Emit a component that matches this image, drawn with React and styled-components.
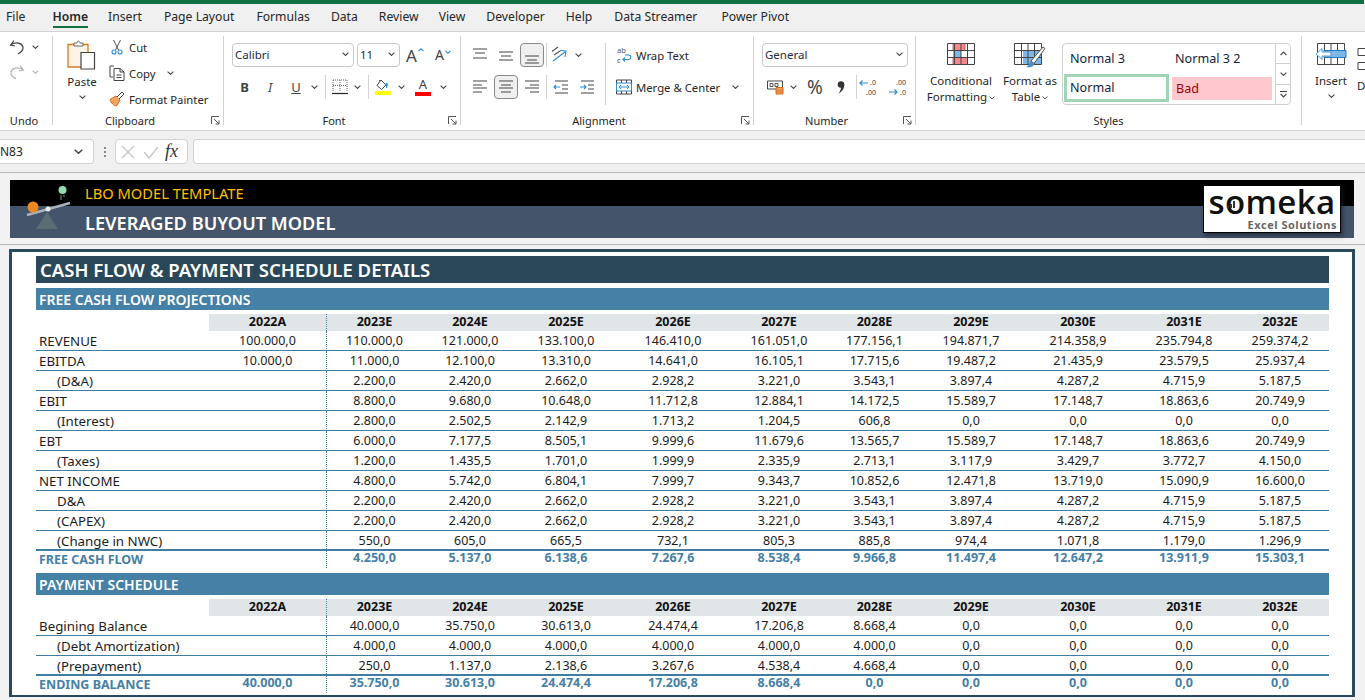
import React from 'react';
import styled, { createGlobalStyle } from 'styled-components';

const GlobalStyle = createGlobalStyle`
  html, body { margin: 0; padding: 0; background: #f2f2f2; overflow: hidden; }
  body { font-family: "Noto Sans", "Open Sans", sans-serif; color: #262626; }
  svg { display: block; flex: none; }
`;

const years = ['2022A', '2023E', '2024E', '2025E', '2026E', '2027E', '2028E', '2029E', '2030E', '2031E', '2032E'];

const cashFlow = [
  { label: 'REVENUE', values: ['100.000,0', '110.000,0', '121.000,0', '133.100,0', '146.410,0', '161.051,0', '177.156,1', '194.871,7', '214.358,9', '235.794,8', '259.374,2'] },
  { label: 'EBITDA', values: ['10.000,0', '11.000,0', '12.100,0', '13.310,0', '14.641,0', '16.105,1', '17.715,6', '19.487,2', '21.435,9', '23.579,5', '25.937,4'] },
  { label: '(D&A)', indent: true, values: ['', '2.200,0', '2.420,0', '2.662,0', '2.928,2', '3.221,0', '3.543,1', '3.897,4', '4.287,2', '4.715,9', '5.187,5'] },
  { label: 'EBIT', values: ['', '8.800,0', '9.680,0', '10.648,0', '11.712,8', '12.884,1', '14.172,5', '15.589,7', '17.148,7', '18.863,6', '20.749,9'] },
  { label: '(Interest)', indent: true, values: ['', '2.800,0', '2.502,5', '2.142,9', '1.713,2', '1.204,5', '606,8', '0,0', '0,0', '0,0', '0,0'] },
  { label: 'EBT', values: ['', '6.000,0', '7.177,5', '8.505,1', '9.999,6', '11.679,6', '13.565,7', '15.589,7', '17.148,7', '18.863,6', '20.749,9'] },
  { label: '(Taxes)', indent: true, values: ['', '1.200,0', '1.435,5', '1.701,0', '1.999,9', '2.335,9', '2.713,1', '3.117,9', '3.429,7', '3.772,7', '4.150,0'] },
  { label: 'NET INCOME', values: ['', '4.800,0', '5.742,0', '6.804,1', '7.999,7', '9.343,7', '10.852,6', '12.471,8', '13.719,0', '15.090,9', '16.600,0'] },
  { label: 'D&A', indent: true, values: ['', '2.200,0', '2.420,0', '2.662,0', '2.928,2', '3.221,0', '3.543,1', '3.897,4', '4.287,2', '4.715,9', '5.187,5'] },
  { label: '(CAPEX)', indent: true, values: ['', '2.200,0', '2.420,0', '2.662,0', '2.928,2', '3.221,0', '3.543,1', '3.897,4', '4.287,2', '4.715,9', '5.187,5'] },
  { label: '(Change in NWC)', indent: true, thick: true, values: ['', '550,0', '605,0', '665,5', '732,1', '805,3', '885,8', '974,4', '1.071,8', '1.179,0', '1.296,9'] },
];
const cashTotal = { label: 'FREE CASH FLOW', values: ['', '4.250,0', '5.137,0', '6.138,6', '7.267,6', '8.538,4', '9.966,8', '11.497,4', '12.647,2', '13.911,9', '15.303,1'] };

const payment = [
  { label: 'Begining Balance', values: ['', '40.000,0', '35.750,0', '30.613,0', '24.474,4', '17.206,8', '8.668,4', '0,0', '0,0', '0,0', '0,0'] },
  { label: '(Debt Amortization)', indent: true, values: ['', '4.000,0', '4.000,0', '4.000,0', '4.000,0', '4.000,0', '4.000,0', '0,0', '0,0', '0,0', '0,0'] },
  { label: '(Prepayment)', indent: true, thick: true, values: ['', '250,0', '1.137,0', '2.138,6', '3.267,6', '4.538,4', '4.668,4', '0,0', '0,0', '0,0', '0,0'] },
];
const paymentTotal = { label: 'ENDING BALANCE', values: ['40.000,0', '35.750,0', '30.613,0', '24.474,4', '17.206,8', '8.668,4', '0,0', '0,0', '0,0', '0,0', '0,0'] };

const tabs = [
  ['File', 6], ['Home', 27], ['Insert', 20], ['Page Layout', 22], ['Formulas', 22], ['Data', 21], ['Review', 21],
  ['View', 20], ['Developer', 21], ['Help', 21], ['Data Streamer', 22], ['Power Pivot', 24],
];

// top chrome
const TitleStrip = styled.div`
  height: 4px;
  background: #107041;
  margin-right: 1px;
`;
const TabBar = styled.div`
  height: 27px;
  display: flex;
  align-items: stretch;
  background: #f0f0f0;
  border-bottom: 1px solid #d2d2d2;
`;
const Tab = styled.div`
  margin-left: ${p => p.$gap}px;
  padding-top: 5px;
  font-size: 12.2px;
  line-height: 16px;
  position: relative;
  font-weight: ${p => (p.$active ? 600 : 400)};
  ${p => p.$active && `
    &::after {
      content: '';
      position: absolute;
      left: 0; right: 0; bottom: 3px;
      height: 2px;
      background: #107041;
    }
  `}
`;
const Ribbon = styled.div`
  height: 89px;
  padding: 4px 0 5px;
  display: flex;
  background: #fff;
  border-bottom: 1px solid #d2d2d2;
  overflow: hidden;
`;
const Group = styled.div`
  width: ${p => p.$w}px;
  height: 89px;
  flex: none;
  box-sizing: border-box;
  display: flex;
  flex-direction: column;
  border-right: ${p => (p.$open ? 'none' : '1px solid #d2d2d2')};
`;
const GroupBody = styled.div`
  height: 77px;
  padding: 7px 0 0 ${p => p.$pad || 0}px;
  display: flex;
  flex: none;
  box-sizing: border-box;
`;
const GroupFoot = styled.div`
  height: 12px;
  display: grid;
  grid-template-columns: 1fr auto 1fr;
  align-items: center;
  font-size: 11px;
  line-height: 15px;
  padding-right: ${p => p.$shift || 0}px;
  span { grid-column: 2; }
  svg { grid-column: 3; justify-self: end; margin-right: ${p => 3 - (p.$shift || 0)}px; }
`;
const Stack = styled.div`
  display: flex;
  flex-direction: column;
  flex: none;
  gap: ${p => p.$gap ?? 8}px;
  margin: ${p => p.$mt || 0}px 0 0 ${p => p.$ml || 0}px;
`;
const Line = styled.div`
  display: flex;
  align-items: center;
  flex: none;
  gap: ${p => p.$gap || 0}px;
  height: 24px;
`;
const IconBtn = styled.div`
  width: ${p => p.$w || 24}px;
  height: 24px;
  flex: none;
  box-sizing: border-box;
  display: flex;
  align-items: center;
  justify-content: center;
  font-size: 12px;
  ${p => p.$active && 'background: #f0f0f0; border: 1px solid #8a8a8a; border-radius: 4px;'}
`;
const Glyph = styled.span`
  font-size: ${p => p.$size || 13}px;
  font-weight: ${p => p.$weight || 400};
  font-style: ${p => (p.$italic ? 'italic' : 'normal')};
  text-decoration: ${p => (p.$under ? 'underline' : 'none')};
  line-height: 1;
  color: #444;
`;
const SizeMark = styled.div`
  display: flex;
  align-items: flex-start;
  gap: 1px;
  svg { margin-top: ${p => (p.$small ? 2 : 1)}px; }
`;
const ColorMark = styled.div`
  display: flex;
  flex-direction: column;
  align-items: center;
  width: 16px;
  i { width: 16px; height: 4px; margin-top: 1px; background: ${p => p.$color}; }
`;
const Divider = styled.div`
  width: ${p => p.$w || 9}px;
  flex: none;
  height: 24px;
  display: flex;
  justify-content: center;
  &::before { content: ''; width: 1px; background: #d2d2d2; }
`;
const TallDivider = styled(Divider)`
  height: 62px;
`;
const Label = styled.span`
  font-size: 11.3px;
  white-space: nowrap;
  margin-left: ${p => p.$ml || 0}px;
`;
const Combo = styled.div`
  width: ${p => p.$w}px;
  height: 24px;
  flex: none;
  box-sizing: border-box;
  margin-right: ${p => p.$mr || 0}px;
  border: 1px solid #c8c8c8;
  border-radius: 4px;
  display: flex;
  align-items: center;
  justify-content: space-between;
  padding: 0 4px 1px 2px;
  font-size: 11.5px;
  color: #1d2a44;
`;
const BigButton = styled.div`
  width: ${p => p.$w}px;
  flex: none;
  display: flex;
  flex-direction: column;
  align-items: ${p => (p.$start ? 'flex-start' : 'center')};
  margin: ${p => p.$mt || 0}px 0 0 ${p => p.$ml || 0}px;
  font-size: 11.5px;
  line-height: 16px;
  text-align: center;
  white-space: nowrap;
  > svg:first-child { margin-bottom: ${p => p.$mb ?? 4}px; }
  > svg:last-child { margin-top: 5px; }
`;
const InlineMark = styled.span`
  display: inline-flex;
  vertical-align: middle;
  margin-left: 2px;
`;
const Gallery = styled.div`
  width: 229px;
  height: 62px;
  box-sizing: border-box;
  border: 1px solid #d0d0d0;
  border-radius: 4px;
  display: flex;
`;
const Swatches = styled.div`
  flex: 1;
  display: grid;
  grid-template-columns: 105px 105px;
  grid-template-rows: 30px 28px;
  padding: 0 0 2px 1px;
  font-size: 12.6px;
  color: #10243e;
`;
const Swatch = styled.div`
  display: flex;
  align-items: center;
  padding-left: ${p => (p.$picked ? 3 : 6)}px;
  padding-bottom: 1px;
  box-sizing: border-box;
  ${p => p.$picked && 'border: 3px solid #a0d5b6;'}
  ${p => p.$bad && 'background: #ffc7ce; color: #9c0006; margin: 3px 0 2px 3px; padding-left: 4px; width: 100px;'}
`;
const GalleryArrows = styled.div`
  width: 14px;
  flex: none;
  border-left: 1px solid #d0d0d0;
  display: flex;
  flex-direction: column;
`;
const GalleryArrow = styled.div`
  flex: 1;
  display: flex;
  align-items: center;
  justify-content: center;
  & + & { border-top: 1px solid #d0d0d0; }
`;

// formula bar
const FormulaBar = styled.div`
  height: 41px;
  display: flex;
  align-items: center;
  background: #f0f0f0;
`;
const NameBox = styled.div`
  width: 94px;
  height: 25px;
  box-sizing: border-box;
  flex: none;
  background: #fff;
  border: 1px solid #d2d2d2;
  border-left: none;
  border-radius: 0 4px 4px 0;
  display: flex;
  align-items: center;
  justify-content: space-between;
  padding: 0 10px 0 0;
  font-size: 12px;
`;
const Grip = styled.div`
  width: 21px;
  flex: none;
  display: flex;
  flex-direction: column;
  align-items: center;
  gap: 2px;
  i { width: 2px; height: 2px; background: #8a8a8a; }
`;
const FxBox = styled.div`
  width: 73px;
  height: 25px;
  flex: none;
  box-sizing: border-box;
  background: #fff;
  border: 1px solid #d2d2d2;
  border-radius: 4px;
  display: flex;
  align-items: center;
  gap: 8px;
  padding-left: 5px;
`;
const FxText = styled.span`
  font-family: "Liberation Serif", serif;
  font-style: italic;
  font-size: 18px;
  color: #333;
  margin-left: -2px;
`;
const FormulaInput = styled.div`
  flex: 1;
  height: 25px;
  margin-left: 5px;
  box-sizing: border-box;
  background: #fff;
  border: 1px solid #d2d2d2;
  border-right: none;
  border-radius: 4px 0 0 4px;
`;

// banner
const Banner = styled.div`
  position: relative;
  margin: 0 11px 0 10px;
  height: 58px;
  display: grid;
  grid-template-rows: 26px 32px;
`;
const BannerTop = styled.div`
  background: #000;
  color: #ffc000;
  font-size: 14.7px;
  line-height: 27px;
  padding-left: 75px;
`;
const BannerBottom = styled.div`
  background: #44546a;
  color: #fff;
  font-size: 18.2px;
  font-weight: 600;
  line-height: 35px;
  padding-left: 75px;
`;
const BannerArt = styled.svg`
  position: absolute;
  left: 15px;
  top: 5px;
`;
const LogoBox = styled.div`
  position: absolute;
  left: 1193px;
  top: 5px;
  width: 138px;
  height: 48px;
  box-sizing: border-box;
  background: #fff;
  border: 1px solid #000;
  box-shadow: 2px 3px 4px rgba(20, 30, 45, 0.6);
  color: #111;
  text-align: center;
`;
const LogoWord = styled.div`
  font-family: "Open Sans", sans-serif;
  font-size: 33px;
  font-weight: 600;
  line-height: 32px;
  letter-spacing: 0.4px;
`;
const LogoSub = styled.div`
  font-family: "Open Sans", sans-serif;
  font-size: 11px;
  font-weight: 700;
  line-height: 14px;
  color: #666;
  text-align: right;
  padding-right: 3px;
  letter-spacing: 0.5px;
`;
const LogoBars = styled.svg`
  position: absolute;
  left: 23px;
  top: 15px;
`;

// sheet
const Rule = styled.div`
  height: 1px;
  background: #b8b8b8;
  margin: ${p => p.$top ?? 6}px 0 ${p => p.$bottom ?? 4}px;
`;
const Frame = styled.div`
  margin: 0 10px 0 9px;
  height: 448px;
  box-sizing: border-box;
  background: #fff;
  border: 3px solid #2a4a5b;
  border-bottom-width: 2px;
  padding: 4px 23px 0 24px;
`;
const Title = styled.div`
  height: 27px;
  background: #2a4859;
  color: #fff;
  font-size: 18.5px;
  font-weight: 600;
  line-height: 27px;
  padding-left: 4px;
  margin-bottom: 5px;
`;
const Section = styled.div`
  height: 22px;
  margin-top: ${p => p.$mt || 0}px;
  margin-bottom: 4px;
  background: #4580a6;
  color: #fff;
  font-size: 14px;
  font-weight: 600;
  line-height: 24px;
  padding-left: 3px;
`;
const Row = styled.div`
  display: grid;
  grid-template-columns: 173px 117px 96px 96px 96px 118px 94px 97px 96px 118px 94px 98px;
  height: ${p => p.$h || 20}px;
  box-sizing: border-box;
  font-size: 12.5px;
  line-height: ${p => (p.$total ? 13 : 20)}px;
  color: ${p => (p.$total ? '#4580a6' : '#1c1c1c')};
  font-weight: ${p => (p.$total ? 700 : 400)};
  ${p => p.$ruled && `border-bottom: ${p.$thick ? 2 : 1}px solid #3f7ea0;`}
  & > :nth-child(3) { border-left: 1px dotted #3f7ea0; }
`;
const RowLabel = styled.div`
  padding-left: ${p => (p.$indent ? 21 : 3)}px;
  white-space: nowrap;
  ${p => (p.$total ? 'line-height: 17px;' : 'font-size: 13.3px;')}
`;
const Cell = styled.div`
  text-align: center;
  white-space: nowrap;
`;
const HeadCell = styled(Cell)`
  background: #e0e5e8;
  font-weight: 700;
  line-height: 16px;
  color: #111;
`;

// icons
const Chevron = ({ size = 7, color = '#444' }) => (
  <svg width={size} height={size * 0.6} viewBox="0 0 7 4.2">
    <path d="M.6.6 3.5 3.4 6.4.6" fill="none" stroke={color} strokeWidth="1.1" />
  </svg>
);

const Caret = ({ down }) => (
  <svg width="6" height="4" viewBox="0 0 6 4">
    <path d={down ? 'M.5.8 3 3.200 5.500.8' : 'M.5 3.200 3 .8l2.500 2.400'} fill="none" stroke="#2e8bd0" strokeWidth="1.100" />
  </svg>
);

const Lines = ({ rows }) => (
  <svg width="16" height="18" viewBox="0 0 16 18">
    {rows.map(([a, b, y], i) => <path key={i} d={`M${a} ${y}H${b}`} stroke="#444" strokeWidth="1" />)}
  </svg>
);

const Launcher = () => (
  <svg width="9" height="9" viewBox="0 0 9 9">
    <path d="M.5 8V.5H8M3 3l5 5M8 4.500V8H4.500" fill="none" stroke="#555" strokeWidth="1" />
  </svg>
);

const UndoIcon = () => (
  <svg width="16" height="16" viewBox="0 0 16 16">
    <path d="M5 1.500 1.500 6 6 7M2 5.600C7 2.500 13 4 14 8c.6 3-1.500 5-5 7" fill="none" stroke="#444" strokeWidth="1.200" />
  </svg>
);

const RedoIcon = () => (
  <svg width="16" height="16" viewBox="0 0 16 16">
    <path d="M11 1.500 14.500 6 10 7M14 5.600C9 2.500 3 4 2 8c-.6 3 1.500 5 5 7" fill="none" stroke="#b4b4b4" strokeWidth="1.200" />
  </svg>
);

const PasteIcon = () => (
  <svg width="30" height="32" viewBox="0 0 30 32">
    <path d="M1 4.500h20V27H1z" fill="#fdf3e6" stroke="#d67c1c" strokeWidth="1.300" />
    <path d="M7 5V3h3c0-2.500 3-2.500 3 0h3v3H7z" fill="#fff" stroke="#666" strokeWidth="1" />
    <path d="M14 12.500h13.500V29H14z" fill="#fff" stroke="#444" strokeWidth="1.200" />
  </svg>
);

const ScissorsIcon = () => (
  <svg width="12" height="16" viewBox="0 0 12 16">
    <path d="M2.500 1 7.500 11M9.500 1 4.500 11" fill="none" stroke="#555" strokeWidth="1" />
    <circle cx="3" cy="13" r="2" fill="none" stroke="#2e8bd0" strokeWidth="1.100" />
    <circle cx="9" cy="13" r="2" fill="none" stroke="#2e8bd0" strokeWidth="1.100" />
  </svg>
);

const CopyIcon = () => (
  <svg width="16" height="16" viewBox="0 0 16 16">
    <path d="M5 1H1v11h3M5 3.500h6l4 3.500v8.500H5zM11 3.500V7h4M7.500 10h5M7.500 12.500h5" fill="none" stroke="#444" strokeWidth="1" />
  </svg>
);

const BrushIcon = () => (
  <svg width="16" height="16" viewBox="0 0 16 16">
    <path d="M1 8.500 7 5l4 4-3.500 6C5 15 2 12 1 8.500z" fill="#f4a460" stroke="#d6691c" strokeWidth="1" />
    <path d="m8 6 5-5 2 2-5 5" fill="#fff" stroke="#444" strokeWidth="1" />
  </svg>
);

const BordersIcon = () => (
  <svg width="16" height="16" viewBox="0 0 16 16">
    <path d="M1 1h14M1 1v11M15 1v11M8 1v11M1 6.500h14" fill="none" stroke="#666" strokeWidth="1" strokeDasharray="1 1" />
    <path d="M0 14.500h16" stroke="#222" strokeWidth="1.200" />
  </svg>
);

const FillIcon = () => (
  <svg width="16" height="16" viewBox="0 0 16 16">
    <path d="m6 1 5 5-4.500 4.500L2 6.500zM5 2l-1-1" fill="none" stroke="#444" strokeWidth="1" />
    <path d="M11.500 9V5.500M10 6.500l1.500-2 1.500 2" fill="none" stroke="#2e8bd0" strokeWidth="1.200" />
    <path d="M0 12h16v4H0z" fill="#ffff00" />
  </svg>
);

const OrientIcon = () => (
  <svg width="18" height="18" viewBox="0 0 18 18">
    <path d="M1 5.500 7 1M3 9l6-4" stroke="#555" strokeWidth="1.200" />
    <path d="m2 15 12-9M9 4.500l6 .5-1 6" fill="none" stroke="#2e8bd0" strokeWidth="1.100" />
  </svg>
);

const OutdentIcon = ({ flip }) => (
  <svg width="16" height="14" viewBox="0 0 16 14">
    <path d="M2 1h13M9 5h6M9 9h6M2 13h13" stroke="#444" strokeWidth="1" />
    <path d={flip ? 'M1 7h6M5 5l2 2-2 2' : 'M1 7h6M3 5 1 7l2 2'} fill="none" stroke="#2e8bd0" strokeWidth="1.100" />
  </svg>
);

const WrapIcon = () => (
  <svg width="16" height="22" viewBox="0 0 16 22">
    <text x="1" y="9" fontSize="7.500" fill="#555">ab</text>
    <text x="1" y="19" fontSize="7.500" fill="#555">c</text>
    <path d="M9 11h3.500c3 0 3 4.500 0 4.500H7M9 13.500l-2 2 2 2" fill="none" stroke="#2e8bd0" strokeWidth="1.100" />
  </svg>
);

const MergeIcon = () => (
  <svg width="16" height="16" viewBox="0 0 16 16">
    <path d="M.5 1h15v14H.5zM5.500 1v3M10.500 1v3M5.500 12v3M10.500 12v3" fill="none" stroke="#444" strokeWidth="1" />
    <path d="M.5 4h15v8H.5z" fill="#fff" stroke="#2e8bd0" strokeWidth="1" />
    <path d="M3 8h10M5 6 3 8l2 2M11 6l2 2-2 2" fill="none" stroke="#2e8bd0" strokeWidth="1" />
  </svg>
);

const AccountingIcon = () => (
  <svg width="17" height="15" viewBox="0 0 17 15">
    <path d="M.5 1h15v8H.5z" fill="none" stroke="#444" strokeWidth="1" />
    <path d="M3 3.500h3v3H3zM8 3.500h3v3H8z" fill="none" stroke="#444" strokeWidth=".9" />
    <path d="M9 7.500h7V14H9z" fill="#f4a460" stroke="#d6691c" strokeWidth="1" />
    <path d="M9 10h7M9 12h7" stroke="#d6691c" strokeWidth=".8" />
  </svg>
);

const CommaIcon = () => (
  <svg width="8" height="13" viewBox="0 0 8 13">
    <circle cx="4" cy="3.500" r="3.300" fill="#333" />
    <path d="M7.200 3.500C7.400 7.500 5 11 1.500 12.500 3.500 10 4 8 4 6z" fill="#333" />
  </svg>
);

const DecimalIcon = ({ more }) => (
  <svg width="20" height="21" viewBox="0 0 20 21">
    <path d={more ? 'M1 15h8M6.500 12.500 9 15l-2.500 2.500' : 'M9 6H1M3.500 3.500 1 6l2.500 2.500'} fill="none" stroke="#2e8bd0" strokeWidth="1.200" />
    {more ? (
      <>
        <text x="8" y="8" fontSize="7" fill="#444">.00</text>
        <text x="12" y="18" fontSize="7" fill="#444">.0</text>
      </>
    ) : (
      <>
        <text x="11" y="8" fontSize="7" fill="#444">.0</text>
        <text x="7" y="18" fontSize="7" fill="#444">.00</text>
      </>
    )}
  </svg>
);

const GridBase = () => (
  <path d="M.5.5h27v21H.5zM7.500.5v21M14 .5v21M20.500.5v21M.5 7.500h27M.5 14.500h27" fill="none" stroke="#444" strokeWidth="1" />
);

const ConditionalIcon = () => (
  <svg width="28" height="22" viewBox="0 0 28 22">
    <path d="M6 .5h12v7H6zM6 14.500h14.500v7H6z" fill="#f4868c" stroke="#c8323c" strokeWidth=".8" />
    <path d="M6 7.500h8v7H6z" fill="#7eb8e8" />
    <GridBase />
  </svg>
);

const TableIcon = () => (
  <svg width="32" height="26" viewBox="0 0 32 26">
    <path d="M9 7.500h18v14H9z" fill="#7eb8e8" />
    <GridBase />
    <path d="m17 18 12-14 2 1.500-11 15z" fill="#fff" stroke="#444" strokeWidth=".9" />
    <path d="M17 18c-2 1-1 4-5 6 4 1 8 0 8-3.500z" fill="#4a90d0" />
  </svg>
);

const InsertIcon = () => (
  <svg width="32" height="22" viewBox="0 0 32 22">
    <path d="M2.500.5h27v21h-27zM9.500.5v21M16 .5v21M22.500.5v21" fill="none" stroke="#444" strokeWidth="1" />
    <path d="M9 7.500h22v7H9z" fill="#7eb8e8" stroke="#1f78c1" strokeWidth="1" />
    <path d="M16 9H7V5.500L1 11l6 5.500V13h9z" fill="#fff" stroke="#4a9ad6" strokeWidth="1" />
  </svg>
);

const DeleteIcon = () => (
  <svg width="10" height="22" viewBox="0 0 10 22">
    <path d="M10 .5H1v7h9M10 14.500H1v7h9" fill="none" stroke="#444" strokeWidth="1" />
  </svg>
);

const CrossIcon = () => (
  <svg width="14" height="14" viewBox="0 0 14 14">
    <path d="m1 1 12 12M13 1 1 13" stroke="#c4c4c4" strokeWidth="1.200" />
  </svg>
);

const CheckIcon = () => (
  <svg width="16" height="14" viewBox="0 0 16 14">
    <path d="m1 7 5 6 9-11" fill="none" stroke="#c4c4c4" strokeWidth="1.200" />
  </svg>
);

const top = [[1, 15, 3], [3, 13, 7], [1, 15, 12]];
const middle = [[1, 15, 6], [3, 13, 10], [1, 15, 14]];
const bottom = [[1, 15, 10], [3, 13, 14], [1, 15, 17]];
const left = [[1, 15, 3], [1, 10, 7], [1, 15, 10], [1, 10, 14]];
const center = [[1, 15, 3], [3, 13, 7], [1, 15, 10], [3, 13, 14]];
const right = [[1, 15, 3], [6, 15, 7], [1, 15, 10], [6, 15, 14]];

const Numbers = ({ row, total, ruled }) => (
  <Row $total={total} $ruled={ruled} $thick={row.thick} $h={total ? 17 : 20}>
    <RowLabel $indent={row.indent} $total={total}>{row.label}</RowLabel>
    {row.values.map((v, i) => <Cell key={i}>{v}</Cell>)}
  </Row>
);

const YearHeader = () => (
  <Row $h={17}>
    <RowLabel />
    {years.map(y => <HeadCell key={y}>{y}</HeadCell>)}
  </Row>
);

export default function App() {
  return (
    <>
      <GlobalStyle />
      <TitleStrip />
      <TabBar>
        {tabs.map(([name, gap]) => <Tab key={name} $gap={gap} $active={name === 'Home'}>{name}</Tab>)}
      </TabBar>
      <Ribbon>
        <Group $w={53}>
          <GroupBody $pad={9}>
            <Stack $gap={1} $mt={-8}>
              <Line><UndoIcon /><IconBtn $w={20}><Chevron /></IconBtn></Line>
              <Line><RedoIcon /><IconBtn $w={20}><Chevron color="#b4b4b4" /></IconBtn></Line>
            </Stack>
          </GroupBody>
          <GroupFoot $shift={4}><span>Undo</span></GroupFoot>
        </Group>
        <Group $w={171}>
          <GroupBody $pad={14}>
            <BigButton $w={30} $mb={2} $mt={-3}>
              <PasteIcon />
              Paste
              <Chevron />
            </BigButton>
            <Stack $gap={2} $ml={12} $mt={-8}>
              <Line><IconBtn $w={16}><ScissorsIcon /></IconBtn><Label $ml={4}>Cut</Label></Line>
              <Line><CopyIcon /><Label $ml={4}>Copy</Label><IconBtn $w={30}><Chevron /></IconBtn></Line>
              <Line><BrushIcon /><Label $ml={4}>Format Painter</Label></Line>
            </Stack>
          </GroupBody>
          <GroupFoot $shift={16}><span>Clipboard</span><Launcher /></GroupFoot>
        </Group>
        <Group $w={237}>
          <GroupBody $pad={8}>
            <Stack>
              <Line>
                <Combo $w={122} $mr={3}>Calibri<Chevron /></Combo>
                <Combo $w={43}>11<Chevron /></Combo>
                <IconBtn $w={30}><SizeMark><Glyph $size={17}>A</Glyph><Caret /></SizeMark></IconBtn>
                <IconBtn $w={26}><SizeMark $small><Glyph $size={14}>A</Glyph><Caret down /></SizeMark></IconBtn>
              </Line>
              <Line>
                <IconBtn $w={25}><Glyph $weight={700}>B</Glyph></IconBtn>
                <IconBtn $w={26}><Glyph $italic>I</Glyph></IconBtn>
                <IconBtn $w={26}><Glyph $under>U</Glyph></IconBtn>
                <IconBtn $w={11}><Chevron /></IconBtn>
                <Divider $w={10} />
                <IconBtn $w={20}><BordersIcon /></IconBtn>
                <IconBtn $w={14}><Chevron /></IconBtn>
                <Divider $w={8} />
                <IconBtn $w={22}><FillIcon /></IconBtn>
                <IconBtn $w={14}><Chevron /></IconBtn>
                <IconBtn $w={30}><ColorMark $color="#ff0000"><Glyph $size={13}>A</Glyph><i /></ColorMark></IconBtn>
                <IconBtn $w={10}><Chevron /></IconBtn>
              </Line>
            </Stack>
          </GroupBody>
          <GroupFoot $shift={16}><span>Font</span><Launcher /></GroupFoot>
        </Group>
        <Group $w={293}>
          <GroupBody $pad={7}>
            <Stack>
              <Line $gap={2}>
                <IconBtn><Lines rows={top} /></IconBtn>
                <IconBtn><Lines rows={middle} /></IconBtn>
                <IconBtn $active><Lines rows={bottom} /></IconBtn>
                <Divider $w={1} />
                <IconBtn $w={22}><OrientIcon /></IconBtn>
                <IconBtn $w={10}><Chevron /></IconBtn>
              </Line>
              <Line $gap={2}>
                <IconBtn><Lines rows={left} /></IconBtn>
                <IconBtn $active><Lines rows={center} /></IconBtn>
                <IconBtn><Lines rows={right} /></IconBtn>
                <Divider $w={1} />
                <IconBtn><OutdentIcon /></IconBtn>
                <IconBtn><OutdentIcon flip /></IconBtn>
              </Line>
            </Stack>
            <TallDivider $w={12} />
            <Stack>
              <Line><IconBtn $w={25}><WrapIcon /></IconBtn><Label>Wrap Text</Label></Line>
              <Line>
                <IconBtn $w={25}><MergeIcon /></IconBtn>
                <Label>Merge &amp; Center</Label>
                <IconBtn $w={30}><Chevron /></IconBtn>
              </Line>
            </Stack>
          </GroupBody>
          <GroupFoot $shift={16}><span>Alignment</span><Launcher /></GroupFoot>
        </Group>
        <Group $w={162}>
          <GroupBody $pad={8}>
            <Stack>
              <Combo $w={146}>General<Chevron /></Combo>
              <Line>
                <IconBtn $w={26}><AccountingIcon /></IconBtn>
                <IconBtn $w={10}><Chevron /></IconBtn>
                <IconBtn $w={34}><Glyph $size={19}>%</Glyph></IconBtn>
                <IconBtn $w={18}><CommaIcon /></IconBtn>
                <Divider $w={12} />
                <IconBtn $w={14}><DecimalIcon /></IconBtn>
                <IconBtn $w={44}><DecimalIcon more /></IconBtn>
              </Line>
            </Stack>
          </GroupBody>
          <GroupFoot $shift={16}><span>Number</span><Launcher /></GroupFoot>
        </Group>
        <Group $w={386}>
          <GroupBody $pad={8}>
            <BigButton $w={74} $mb={8}>
              <ConditionalIcon />
              Conditional
              <span>Formatting<InlineMark><Chevron size={6} /></InlineMark></span>
            </BigButton>
            <BigButton $w={64} $mb={4}>
              <TableIcon />
              Format as
              <span>Table<InlineMark><Chevron size={6} /></InlineMark></span>
            </BigButton>
            <Gallery>
              <Swatches>
                <Swatch>Normal 3</Swatch>
                <Swatch>Normal 3 2</Swatch>
                <Swatch $picked>Normal</Swatch>
                <Swatch $bad>Bad</Swatch>
              </Swatches>
              <GalleryArrows>
                <GalleryArrow><svg width="7" height="5" viewBox="0 0 7 5"><path d="M.6 4 3.500 1 6.400 4" fill="none" stroke="#444" strokeWidth="1.100" /></svg></GalleryArrow>
                <GalleryArrow><Chevron /></GalleryArrow>
                <GalleryArrow><svg width="7" height="7" viewBox="0 0 7 7"><path d="M0 .5h7M.6 3 3.500 6 6.400 3" fill="none" stroke="#444" strokeWidth="1.100" /></svg></GalleryArrow>
              </GalleryArrows>
            </Gallery>
          </GroupBody>
          <GroupFoot><span>Styles</span></GroupFoot>
        </Group>
        <Group $w={63} $open>
          <GroupBody $pad={13}>
            <BigButton $w={32} $mb={8}>
              <InsertIcon />
              Insert
              <Chevron />
            </BigButton>
            <BigButton $w={14} $mb={8} $ml={10} $start>
              <DeleteIcon />
              D
            </BigButton>
          </GroupBody>
        </Group>
      </Ribbon>
      <FormulaBar>
        <NameBox>N83<Chevron size={9} /></NameBox>
        <Grip><i /><i /><i /></Grip>
        <FxBox><CrossIcon /><CheckIcon /><FxText>fx</FxText></FxBox>
        <FormulaInput />
      </FormulaBar>
      <Rule $top={0} $bottom={7} />
      <Banner>
        <BannerTop>LBO MODEL TEMPLATE</BannerTop>
        <BannerBottom>LEVERAGED BUYOUT MODEL</BannerBottom>
        <BannerArt width="46" height="46" viewBox="0 0 46 46">
          <path d="M22 27 11 44h22z" fill="#5c6c74" />
          <path d="M2 30 45 18" stroke="#aab2bb" strokeWidth="2.500" />
          <circle cx="23" cy="24" r="2.500" fill="#e8ecef" />
          <circle cx="8" cy="22" r="5.500" fill="#ee8a1d" />
          <circle cx="37.500" cy="5" r="4" fill="#8fdcae" />
          <path d="M36 10v5M39 10v2" stroke="#8a8a8a" strokeWidth="1" />
        </BannerArt>
        <LogoBox>
          <LogoWord>someka</LogoWord>
          <LogoSub>Excel Solutions</LogoSub>
          <LogoBars width="8" height="7" viewBox="0 0 8 7">
            <path d="M0 5h2v2H0zM3 3h2v4H3zM6 0h2v7H6z" fill="#333" />
          </LogoBars>
        </LogoBox>
      </Banner>
      <Rule />
      <Frame>
        <Title>CASH FLOW &amp; PAYMENT SCHEDULE DETAILS</Title>
        <Section>FREE CASH FLOW PROJECTIONS</Section>
        <YearHeader />
        {cashFlow.map(row => <Numbers key={row.label} row={row} ruled />)}
        <Numbers row={cashTotal} total />
        <Section $mt={5}>PAYMENT SCHEDULE</Section>
        <YearHeader />
        {payment.map(row => <Numbers key={row.label} row={row} ruled />)}
        <Numbers row={paymentTotal} total />
      </Frame>
    </>
  );
}
